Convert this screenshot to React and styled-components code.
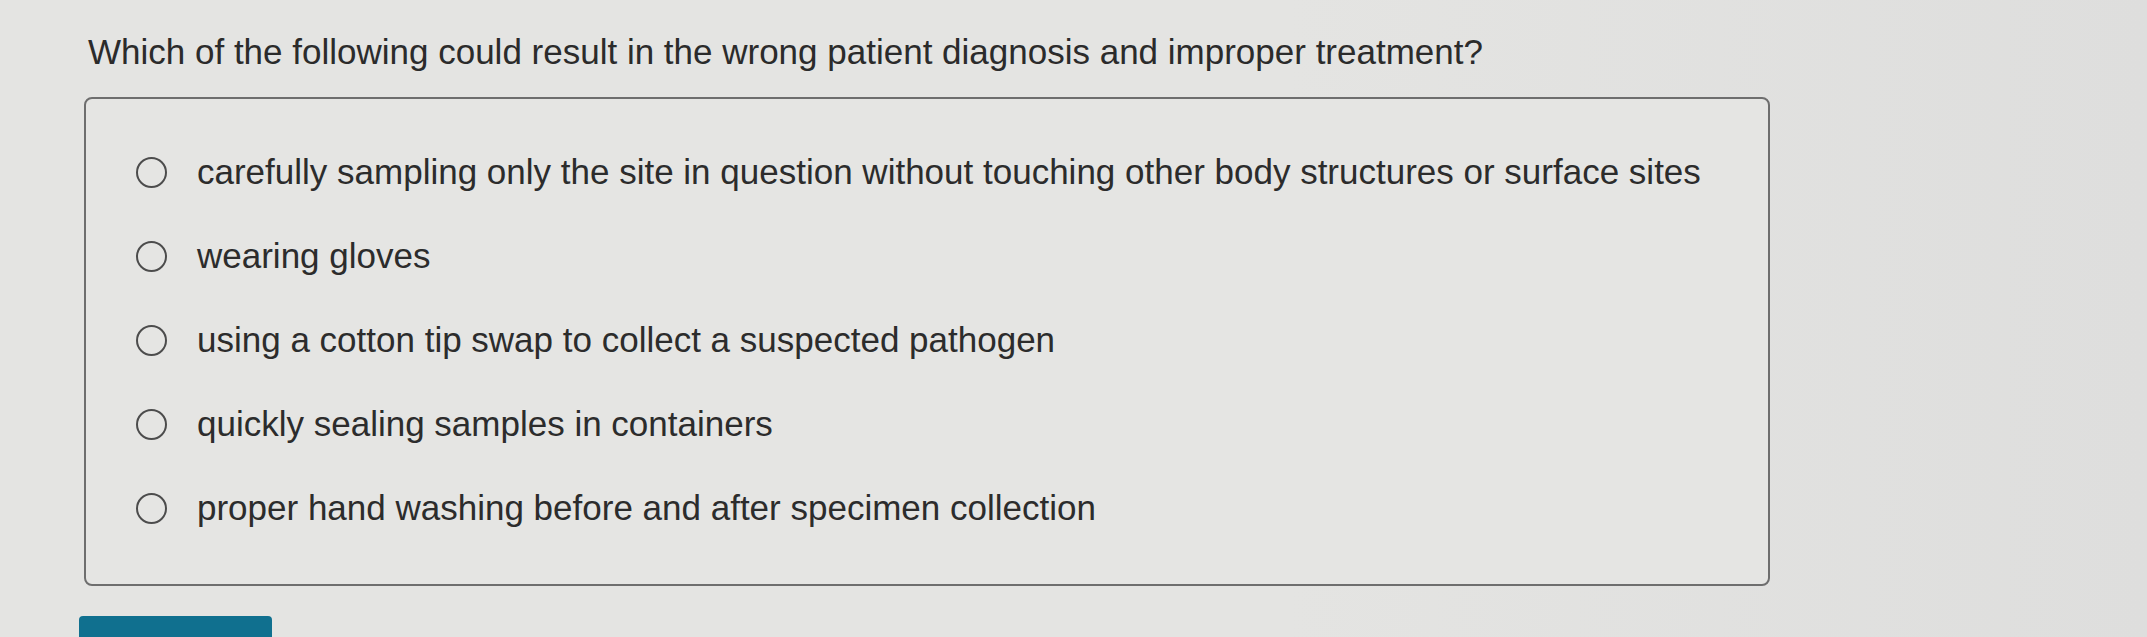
import React from 'react'
import styled, { createGlobalStyle } from 'styled-components'

const GlobalStyle = createGlobalStyle`
  html, body {
    margin: 0;
    padding: 0;
    background: #e2e2e0;
  }
  body {
    font-family: "Liberation Sans", Arial, sans-serif;
    color: #2c2c2c;
  }
`

const options = [
  'carefully sampling only the site in question without touching other body structures or surface sites',
  'wearing gloves',
  'using a cotton tip swap to collect a suspected pathogen',
  'quickly sealing samples in containers',
  'proper hand washing before and after specimen collection',
]

export default function App() {
  return (
    <>
      <GlobalStyle />
      <Page>
        <Question>Which of the following could result in the wrong patient diagnosis and improper treatment?</Question>
        <OptionsBox>
          {options.map((text) => (
            <OptionRow key={text}>
              <Radio />
              <OptionText>{text}</OptionText>
            </OptionRow>
          ))}
        </OptionsBox>
        <SubmitButton aria-label="Submit" />
      </Page>
    </>
  )
}

const Page = styled.div`
  height: 637px;
  overflow: hidden;
  padding: 31px 0 0 84px;
  box-sizing: border-box;
  background: linear-gradient(90deg, #e4e4e2 0%, #e4e4e2 60%, #dededd 100%);
`
const Question = styled.h1`
  margin: 0 0 0 4px;
  font-size: 35px;
  font-weight: 400;
  line-height: 42px;
  color: #2b2b2b;
`
const OptionsBox = styled.div`
  margin-top: 24px;
  width: 1686px;
  box-sizing: border-box;
  border: 2px solid #6e6e6e;
  border-radius: 8px;
  padding: 31px 0 34px 50px;
  background: #e5e5e3;
`
const OptionRow = styled.label`
  display: flex;
  align-items: center;
  height: 84px;
  gap: 30px;
`
const Radio = styled.span`
  width: 31px;
  height: 31px;
  box-sizing: border-box;
  border: 2.5px solid #4c4c4c;
  border-radius: 50%;
  flex-shrink: 0;
`
const OptionText = styled.span`
  font-size: 35px;
  color: #2c2c2c;
  white-space: nowrap;
`
const SubmitButton = styled.button`
  display: block;
  margin: 30px 0 0 -5px;
  width: 193px;
  height: 60px;
  border: none;
  border-radius: 4px;
  background: #10708f;
`
